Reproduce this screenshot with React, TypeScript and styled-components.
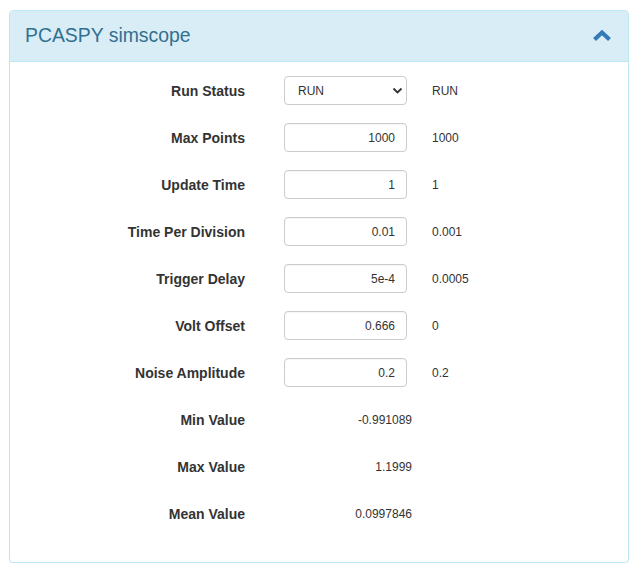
import React from "react";
import styled, { createGlobalStyle } from "styled-components";

const Global = createGlobalStyle`
  html, body { margin: 0; padding: 0; background: #ffffff; }
  body { font-family: "Liberation Sans", Arial, Helvetica, sans-serif; color: #333333; }
  * { box-sizing: border-box; }
`;

const Panel = styled.section`
  width: 620px;
  margin: 10px 0 0 9px;
  border: 1px solid #bce8f1;
  border-radius: 4px;
  background: #ffffff;
  box-shadow: 0 1px 1px rgba(0, 0, 0, 0.05);
  overflow: hidden;
`;

const Header = styled.header`
  height: 51px;
  display: flex;
  align-items: center;
  justify-content: space-between;
  padding: 0 16px 1px 15px;
  background: #d9edf7;
  border-bottom: 1px solid #bce8f1;
`;

const Title = styled.h3`
  margin: 0;
  font-size: 19.4px;
  font-weight: 400;
  color: #31708f;
`;

const Toggle = styled.button`
  border: 0;
  background: transparent;
  padding: 0;
  display: flex;
  align-items: center;
  cursor: pointer;
  color: #337ab7;
`;

const Body = styled.div`
  padding: 5px 0 25px;
`;

const Row = styled.div`
  height: 47px;
  display: flex;
  align-items: center;
`;

const Label = styled.div`
  width: 236px;
  text-align: right;
  font-size: 14px;
  font-weight: 700;
  color: #333333;
  padding-right: 1px;
`;

const Control = styled.div`
  width: 128px;
  margin-left: 38px;
  display: flex;
  justify-content: flex-start;
`;

const Field = styled.input`
  width: 123px;
  height: 29px;
  border: 1px solid #cccccc;
  border-radius: 4px;
  padding: 0 11px;
  text-align: right;
  font-family: inherit;
  font-size: 12px;
  color: #333333;
  background: #ffffff;
  box-shadow: inset 0 1px 1px rgba(0, 0, 0, 0.04);
  outline: none;
`;

const SelectWrap = styled.div`
  position: relative;
  width: 123px;
  height: 29px;
`;

const Select = styled.select`
  appearance: none;
  -webkit-appearance: none;
  width: 100%;
  height: 100%;
  border: 1px solid #cccccc;
  border-radius: 4px;
  padding: 0 24px 0 13px;
  font-family: inherit;
  font-size: 12px;
  color: #333333;
  background: #ffffff;
  outline: none;
`;

const Caret = styled.svg`
  position: absolute;
  right: 4px;
  top: 11px;
  pointer-events: none;
`;

const ReadOnly = styled.div`
  width: 128px;
  text-align: right;
  font-size: 12px;
  color: #333333;
`;

const Value = styled.div`
  margin-left: 20px;
  font-size: 12px;
  color: #333333;
`;

type Item =
  | { label: string; kind: "select"; value: string; readback: string }
  | { label: string; kind: "input"; value: string; readback: string }
  | { label: string; kind: "text"; value: string };

const items: Item[] = [
  { label: "Run Status", kind: "select", value: "RUN", readback: "RUN" },
  { label: "Max Points", kind: "input", value: "1000", readback: "1000" },
  { label: "Update Time", kind: "input", value: "1", readback: "1" },
  { label: "Time Per Division", kind: "input", value: "0.01", readback: "0.001" },
  { label: "Trigger Delay", kind: "input", value: "5e-4", readback: "0.0005" },
  { label: "Volt Offset", kind: "input", value: "0.666", readback: "0" },
  { label: "Noise Amplitude", kind: "input", value: "0.2", readback: "0.2" },
  { label: "Min Value", kind: "text", value: "-0.991089" },
  { label: "Max Value", kind: "text", value: "1.1999" },
  { label: "Mean Value", kind: "text", value: "0.0997846" },
];

export default function App() {
  return (
    <>
      <Global />
      <Panel>
        <Header>
          <Title>PCASPY simscope</Title>
          <Toggle aria-label="collapse">
            <svg width="20" height="13" viewBox="0 0 20 13">
              <polyline
                points="2.5,10.5 10,3.5 17.5,10.5"
                fill="none"
                stroke="currentColor"
                strokeWidth="4.2"
                strokeLinejoin="miter"
                strokeLinecap="butt"
              />
            </svg>
          </Toggle>
        </Header>
        <Body>
          {items.map((it) => (
            <Row key={it.label}>
              <Label>{it.label}</Label>
              {it.kind === "text" ? (
                <Control>
                  <ReadOnly>{it.value}</ReadOnly>
                </Control>
              ) : (
                <>
                  <Control>
                    {it.kind === "select" ? (
                      <SelectWrap>
                        <Select defaultValue={it.value}>
                          <option value="RUN">RUN</option>
                          <option value="STOP">STOP</option>
                        </Select>
                        <Caret width="11" height="8" viewBox="0 0 11 8">
                          <polyline
                            points="1.5,1.5 5.5,5.5 9.5,1.5"
                            fill="none"
                            stroke="#333"
                            strokeWidth="1.8"
                          />
                        </Caret>
                      </SelectWrap>
                    ) : (
                      <Field defaultValue={it.value} />
                    )}
                  </Control>
                  <Value>{it.readback}</Value>
                </>
              )}
            </Row>
          ))}
        </Body>
      </Panel>
    </>
  );
}
